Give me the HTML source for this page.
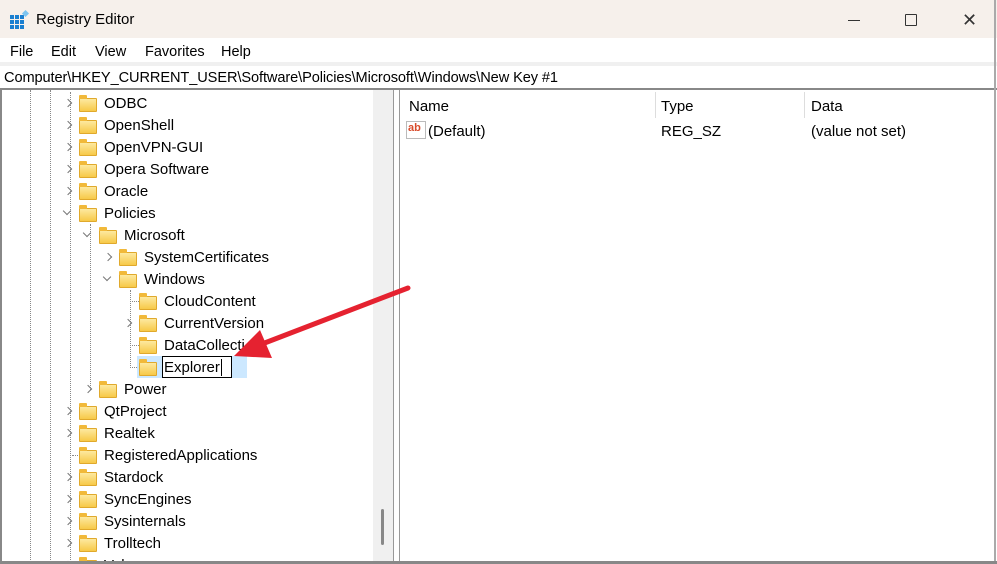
<!DOCTYPE html>
<html><head><style>
*{margin:0;padding:0;box-sizing:border-box}
body{width:997px;height:564px;overflow:hidden;background:#fff;font-family:"Liberation Sans",sans-serif;font-size:15px;color:#000;position:relative}
.a{position:absolute;white-space:nowrap}
.f{position:absolute;width:18px;height:14px;background:linear-gradient(#fde9a0,#f7c948);border:1px solid #e0a92c;border-radius:1px}
.f:before{content:"";position:absolute;left:-1px;top:-4px;width:8px;height:4px;background:#f1b93a;border-radius:1px 1px 0 0}
.c{position:absolute;width:6px;height:6px;border-right:1.3px solid #777;border-bottom:1.3px solid #777}
.r{transform:rotate(-45deg)}
.d{transform:rotate(45deg)}
.vl{position:absolute;width:1px;border-left:1px dotted #888}
.hl{position:absolute;height:1px;border-top:1px dotted #888}
#clip{position:absolute;left:0;top:90px;width:373px;height:471px;overflow:hidden}
#clip>div{position:absolute;left:0;top:-90px;width:373px;height:564px}
</style></head><body>
<div class="a" style="left:0;top:0;width:997px;height:38px;background:#f6f0eb"></div>
<svg class="a" style="top:10px;left:10px" width="20" height="20"><g fill="#1a7fd0"><rect x="0" y="5" width="4" height="4"/><rect x="5" y="5" width="4" height="4"/><rect x="10" y="5" width="4" height="4"/><rect x="0" y="10" width="4" height="4"/><rect x="5" y="10" width="4" height="4"/><rect x="10" y="10" width="4" height="4"/><rect x="0" y="15" width="4" height="4"/><rect x="5" y="15" width="4" height="4"/><rect x="10" y="15" width="4" height="4"/></g><rect x="13" y="1" width="5" height="5" fill="#7cc4f0" transform="rotate(45 15.5 3.5)"/></svg>
<div class="a" style="left:36px;top:11px;font-size:15px">Registry Editor</div>
<div class="a" style="left:848px;top:20px;width:12px;height:1px;background:#333"></div>
<div class="a" style="left:905px;top:14px;width:12px;height:12px;border:1px solid #333;border-radius:1px"></div>
<div class="a" style="left:962px;top:10px;font-size:18px;color:#333">✕</div>
<div class="a" style="left:10px;top:44px;font-size:14.5px">File</div>
<div class="a" style="left:51px;top:44px;font-size:14.5px">Edit</div>
<div class="a" style="left:95px;top:44px;font-size:14.5px">View</div>
<div class="a" style="left:145px;top:44px;font-size:14.5px">Favorites</div>
<div class="a" style="left:221px;top:44px;font-size:14.5px">Help</div>
<div class="a" style="left:0;top:62px;width:997px;height:4px;background:#f0f0f0"></div>
<div class="a" style="left:4px;top:70px;font-size:14.6px;letter-spacing:-0.1px">Computer\HKEY_CURRENT_USER\Software\Policies\Microsoft\Windows\New Key #1</div>
<div class="a" style="left:0;top:88px;width:997px;height:2px;background:#888"></div>
<div class="a" style="left:0;top:88px;width:2px;height:476px;background:#888"></div>
<div class="a" style="left:994px;top:0;width:2px;height:564px;background:#aaa"></div>
<div class="a" style="left:0;top:561px;width:997px;height:3px;background:#888"></div>
<div class="a" style="left:373px;top:90px;width:20px;height:471px;background:#f0f0f0"></div>
<div class="a" style="left:381px;top:509px;width:3px;height:36px;background:#888;border-radius:2px"></div>
<div class="a" style="left:393px;top:90px;width:1px;height:471px;background:#999"></div>
<div class="a" style="left:399px;top:90px;width:1px;height:471px;background:#999"></div>
<div id="clip"><div>
<div class="vl" style="left:30px;top:90px;height:472px"></div>
<div class="vl" style="left:50px;top:90px;height:472px"></div>
<div class="vl" style="left:70px;top:92px;height:470px"></div>
<div class="vl" style="left:90px;top:224px;height:166px"></div>
<div class="vl" style="left:130px;top:290px;height:78px"></div>
<div class="hl" style="left:72px;top:455px;width:8px"></div>
<div class="hl" style="left:130px;top:301px;width:9px"></div>
<div class="hl" style="left:130px;top:345px;width:9px"></div>
<div class="hl" style="left:130px;top:367px;width:9px"></div>
<div class="a" style="left:137px;top:356px;width:110px;height:22px;background:#cce8ff"></div>
<div class="a" style="left:162px;top:356px;width:70px;height:22px;border:1px solid #000;background:#fff"></div>
<div id="t"></div>
</div></div>
<script>
var rows=[[1,"ODBC","r"],[1,"OpenShell","r"],[1,"OpenVPN-GUI","r"],[1,"Opera Software","r"],[1,"Oracle","r"],[1,"Policies","d"],[2,"Microsoft","d"],[3,"SystemCertificates","r"],[3,"Windows","d"],[4,"CloudContent",""],[4,"CurrentVersion","r"],[4,"DataCollecti",""],[4,"Explorer",""],[2,"Power","r"],[1,"QtProject","r"],[1,"Realtek","r"],[1,"RegisteredApplications",""],[1,"Stardock","r"],[1,"SyncEngines","r"],[1,"Sysinternals","r"],[1,"Trolltech","r"],[1,"Valve","r"]];
var h="";rows.forEach(function(r,i){var cy=103+22*i,fx=79+20*(r[0]-1),cx=fx-13;
if(r[2]=="r")h+='<div class="c r" style="left:'+(cx-1)+'px;top:'+(cy-3)+'px"></div>';
if(r[2]=="d")h+='<div class="c d" style="left:'+(cx-2)+'px;top:'+(cy-5)+'px"></div>';
h+='<div class="f" style="left:'+fx+'px;top:'+(cy-5)+'px"></div>';
h+='<div class="a" style="left:'+(fx+25)+'px;top:'+(cy-8)+'px">'+r[1]+(r[1]=="Explorer"?'<span style="border-left:1px solid #000;margin-left:1px"></span>':'')+'</div>';});
document.getElementById("t").innerHTML=h;
</script>
<div class="a" style="left:655px;top:92px;width:1px;height:26px;background:#ddd"></div>
<div class="a" style="left:804px;top:92px;width:1px;height:26px;background:#ddd"></div>
<div class="a" style="left:409px;top:98px">Name</div>
<div class="a" style="left:661px;top:98px">Type</div>
<div class="a" style="left:811px;top:98px">Data</div>
<div class="a" style="left:406px;top:121px;width:20px;height:18px;border:1px solid #bbb;background:#fff;font-size:11px;font-weight:bold;color:#d84a2a;line-height:12px;padding-left:1px">ab</div>
<div class="a" style="left:428px;top:123px">(Default)</div>
<div class="a" style="left:661px;top:123px">REG_SZ</div>
<div class="a" style="left:811px;top:123px">(value not set)</div>
<svg class="a" style="left:0;top:0" width="997" height="564"><line x1="408" y1="288" x2="262" y2="344" stroke="#e52230" stroke-width="5" stroke-linecap="round"/><polygon points="234,356 260,330 272,358" fill="#e52230"/></svg>
</body></html>
